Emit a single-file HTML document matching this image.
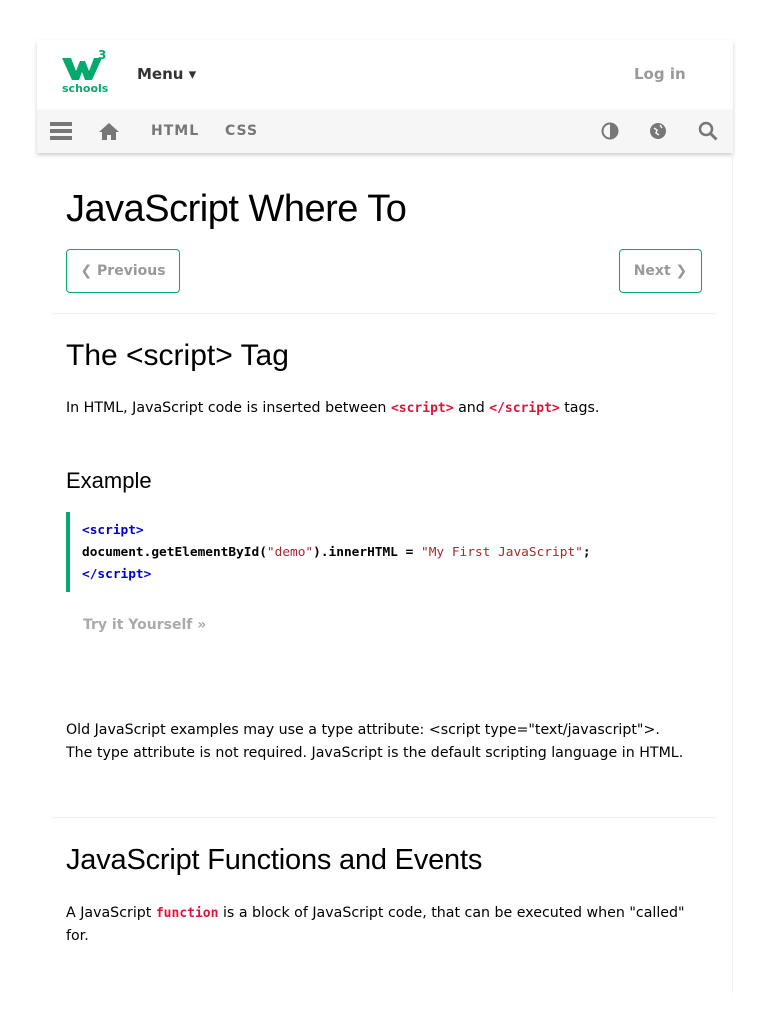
<!DOCTYPE html>
<html><head><meta charset="utf-8"><style>
*{margin:0;padding:0;box-sizing:border-box}
body{width:768px;height:1024px;background:#fff;font-family:"DejaVu Sans","Liberation Sans",sans-serif;color:#000;position:relative;overflow:hidden}
.abs{position:absolute}
.hdr{left:37px;top:40px;width:696px;height:70px;background:#fff;box-shadow:0 2px 4px rgba(0,0,0,.18)}
.nav{left:37px;top:110px;width:696px;height:43px;background:#f6f6f6;box-shadow:0 2px 4px rgba(0,0,0,.2)}
.nav span{position:absolute;top:13px;font-size:14px;color:#777;letter-spacing:1px;font-weight:bold}
.side{left:732px;top:153px;width:1px;height:840px;background:#eee}
.btn{border:1px solid #04aa6d;border-radius:4px;color:#999;font-size:14px;font-weight:bold;height:44px;line-height:42px;text-align:center}
.hr{left:52px;width:664px;height:1px;background:#eee}
p.t{position:absolute;left:66px;font-size:14.2px;line-height:23px;color:#000}
code{font-family:"DejaVu Sans Mono","Liberation Mono",monospace;color:#dc143c;font-size:13px;font-weight:bold}
.code{left:66px;top:512px;width:640px;height:80px;border-left:4px solid #04aa6d;background:#fff;padding:8px 0 0 12px;font-family:"DejaVu Sans Mono","Liberation Mono",monospace;font-size:12.8px;line-height:22px;font-weight:bold}
.b{color:mediumblue}.r{color:brown;font-weight:normal}
</style></head><body>
<div class="abs hdr">
 <svg class="abs" style="left:25px;top:16px" width="40" height="26" viewBox="0 0 40 26"><path d="M0 2h9l5 13 4-10h5l4 10 5-13h8L30 24h-7l-3-8-3 8h-7z" fill="#04aa6d"/></svg>
 <div class="abs" style="left:61px;top:8px;font-size:12px;font-weight:bold;color:#04aa6d">3</div>
 <div class="abs" style="left:25px;top:42px;font-size:11px;font-weight:bold;color:#04aa6d">schools</div>
 <div class="abs" style="left:100px;top:25px;font-size:15px;font-weight:bold;color:#333">Menu ▾</div>
 <div class="abs" style="left:597px;top:25px;font-size:15px;font-weight:bold;color:#999">Log in</div>
</div>
<div class="abs nav">
 <svg class="abs" style="left:13px;top:11px" width="22" height="20"><rect y="1" width="22" height="4" fill="#777"/><rect y="8" width="22" height="4" fill="#777"/><rect y="15" width="22" height="4" fill="#777"/></svg>
 <svg class="abs" style="left:62px;top:12px" width="20" height="18" viewBox="0 0 20 18"><path d="M10 1L0 10h3v8h5v-5h4v5h5v-8h3z" fill="#777"/></svg>
 <span style="left:114px">HTML</span><span style="left:188px">CSS</span>
 <svg class="abs" style="left:564px;top:12px" width="18" height="18"><circle cx="9" cy="9" r="7.5" fill="none" stroke="#777" stroke-width="2"/><path d="M9 1.5a7.5 7.5 0 0 1 0 15z" fill="#777"/></svg>
 <svg class="abs" style="left:612px;top:12px" width="18" height="18"><circle cx="9" cy="9" r="8" fill="#777"/><path d="M5 6l3 2-1 3 3 2M11 3l2 3" stroke="#f6f6f6" stroke-width="1.5" fill="none"/></svg>
 <svg class="abs" style="left:661px;top:11px" width="20" height="20"><circle cx="8" cy="8" r="6" fill="none" stroke="#777" stroke-width="2.5"/><path d="M12.5 12.5l6 6" stroke="#777" stroke-width="3"/></svg>
</div>
<div class="abs side"></div>
<div class="abs" style="left:66px;top:188px;font-size:38px;font-family:'Liberation Sans',sans-serif;letter-spacing:-.5px">JavaScript Where To</div>
<div class="abs btn" style="left:66px;top:249px;width:114px">❮ Previous</div>
<div class="abs btn" style="left:619px;top:249px;width:83px">Next ❯</div>
<div class="abs hr" style="top:313px"></div>
<div class="abs" style="left:66px;top:339px;font-size:30px;font-family:'Liberation Sans',sans-serif">The &lt;script&gt; Tag</div>
<p class="t" style="top:397px">In HTML, JavaScript code is inserted between <code>&lt;script&gt;</code> and <code>&lt;/script&gt;</code> tags.</p>
<div class="abs" style="left:66px;top:468px;font-size:22px;font-family:'Liberation Sans',sans-serif">Example</div>
<div class="abs code"><span class="b">&lt;script&gt;</span><br>document.getElementById(<span class="r">"demo"</span>).innerHTML = <span class="r">"My First JavaScript"</span>;<br><span class="b">&lt;/script&gt;</span></div>
<div class="abs" style="left:83px;top:617px;font-size:14px;color:#aaa;font-weight:bold">Try it Yourself »</div>
<p class="t" style="top:719px">Old JavaScript examples may use a type attribute: &lt;script type="text/javascript"&gt;.<br>The type attribute is not required. JavaScript is the default scripting language in HTML.</p>
<div class="abs hr" style="top:817px"></div>
<div class="abs" style="left:66px;top:844px;font-size:29px;font-family:'Liberation Sans',sans-serif;letter-spacing:-.2px">JavaScript Functions and Events</div>
<p class="t" style="top:902px;width:636px">A JavaScript <code>function</code> is a block of JavaScript code, that can be executed when "called" for.</p>
</body></html>
